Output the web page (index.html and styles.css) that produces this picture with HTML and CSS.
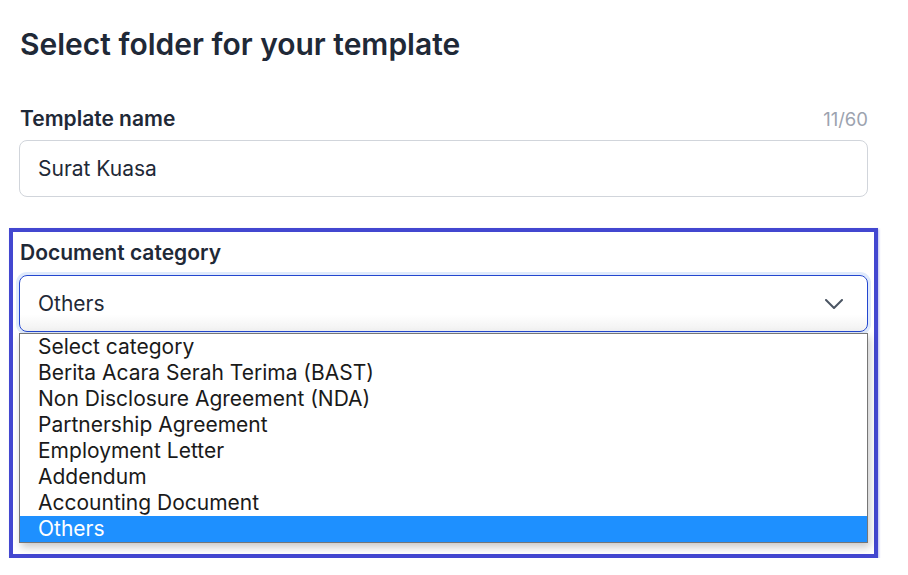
FILE: index.html
```html
<!DOCTYPE html>
<html lang="en">
<head>
<meta charset="utf-8">
<title>Select folder for your template</title>
<link rel="stylesheet" href="styles.css">
</head>
<body>
<div class="page">
  <h1 class="title">Select folder for your template</h1>

  <div class="field">
    <div class="label-row">
      <label class="label">Template name</label>
      <span class="counter">11/60</span>
    </div>
    <div class="input">Surat Kuasa</div>
  </div>

  <div class="frame">
    <label class="label">Document category</label>
    <div class="select">
      <span>Others</span>
      <svg class="chevron" width="18" height="10" viewBox="0 0 18 10"><polyline points="1,1 9,9 17,1" fill="none" stroke="#4b5563" stroke-width="2" stroke-linecap="round" stroke-linejoin="round"/></svg>
    </div>
    <ul class="options">
      <li class="option">Select category</li>
      <li class="option">Berita Acara Serah Terima (BAST)</li>
      <li class="option">Non Disclosure Agreement (NDA)</li>
      <li class="option">Partnership Agreement</li>
      <li class="option">Employment Letter</li>
      <li class="option">Addendum</li>
      <li class="option">Accounting Document</li>
      <li class="option selected">Others</li>
    </ul>
  </div>
</div>
</body>
</html>
```

FILE: styles.css
```css
* { box-sizing: border-box; }

body {
  margin: 0;
  background: #ffffff;
  font-family: Inter, "Noto Sans", "Liberation Sans", sans-serif;
  color: #1f2937;
}

.page {
  padding: 26px 40px 0 19px;
}

.title {
  margin: 0;
  font-size: 30px;
  line-height: 36px;
  font-weight: 600;
  color: #1f2937;
  padding-left: 1px;
}

.field {
  margin-top: 45px;
}

.label-row {
  display: flex;
  justify-content: space-between;
  align-items: baseline;
}

.label {
  display: block;
  font-size: 21px;
  line-height: 24px;
  font-weight: 600;
  color: #1f2937;
  padding-left: 1px;
}

.counter {
  font-size: 18.5px;
  color: #9ca3af;
}

.input {
  margin-top: 9px;
  height: 57px;
  border: 1px solid #d1d5db;
  border-radius: 8px;
  padding: 0 18px;
  display: flex;
  align-items: center;
  font-size: 21px;
  color: #1f2937;
}

.frame {
  margin: 31px -10px 0 -10px;
  border: 4px solid #4347d0;
  padding: 9px 6px 11px;
  box-shadow: 1px 1px 2px rgba(67, 71, 208, 0.35);
}

.select {
  margin-top: 10px;
  height: 57px;
  border: 1px solid #2347cf;
  border-radius: 8px;
  box-shadow: 0 0 0 3px #dfeafc;
  padding: 0 24px 0 18px;
  display: flex;
  align-items: center;
  justify-content: space-between;
  font-size: 21px;
  color: #1f2937;
  background: linear-gradient(#ffffff 70%, #f1f1f1);
}

.chevron {
  display: block;
}

.options {
  list-style: none;
  margin: 1px 0 0;
  padding: 0;
  border: 1px solid #767676;
  background: #ffffff;
  box-shadow: 2px 4px 8px rgba(0, 0, 0, 0.22);
}

.option {
  height: 26px;
  line-height: 26px;
  padding-left: 18px;
  font-size: 21px;
  color: #1a1a1a;
}

.option.selected {
  background: #1e90ff;
  color: #ffffff;
}
```
